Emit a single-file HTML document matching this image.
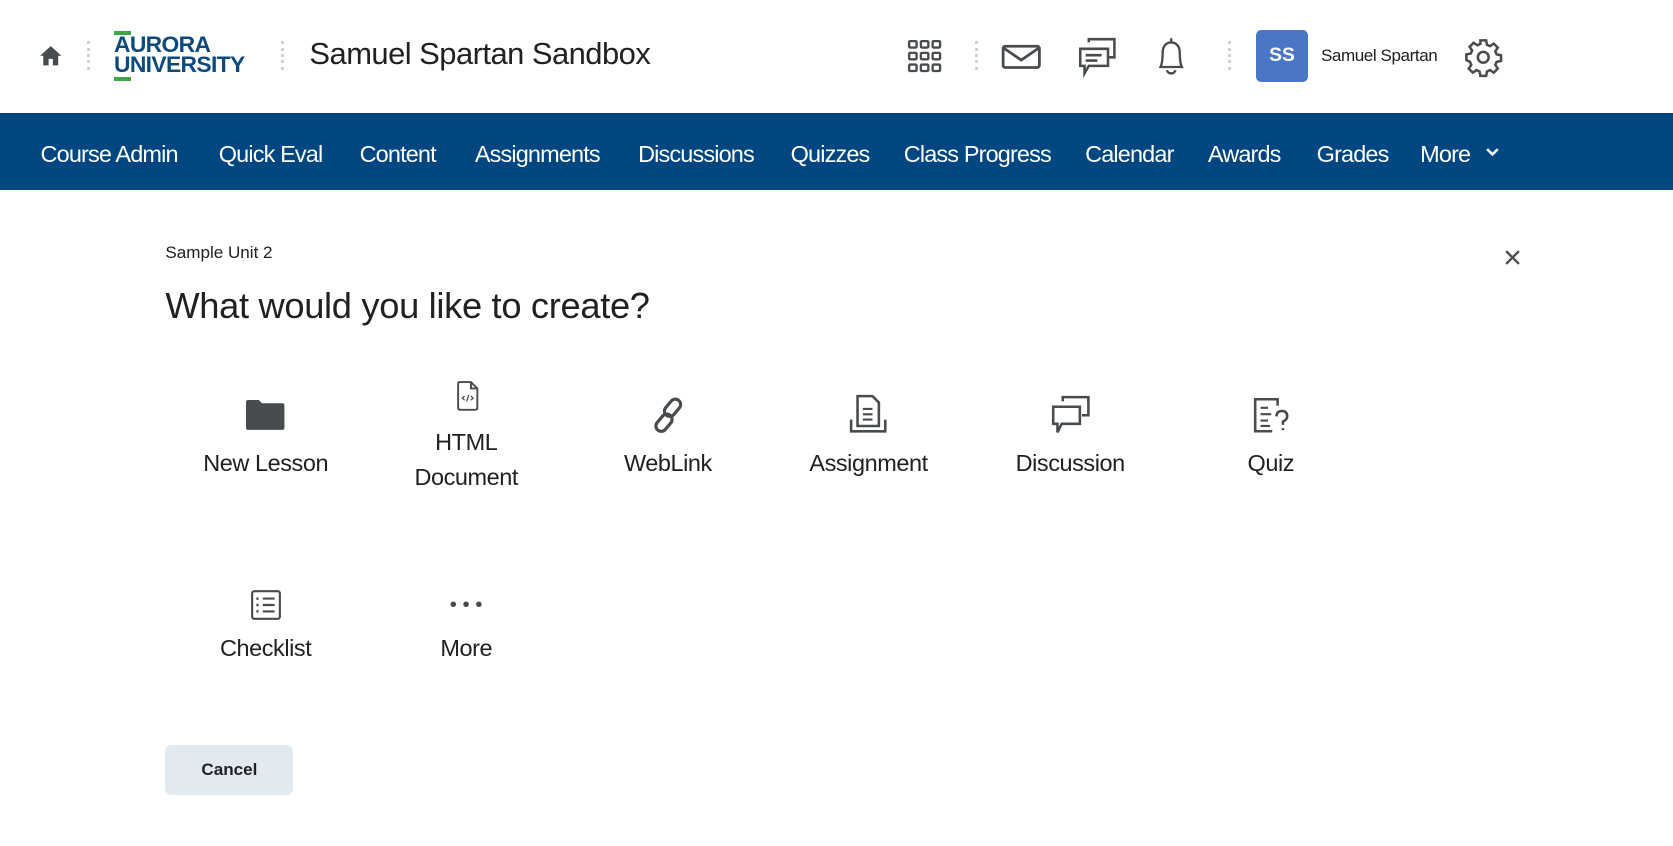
<!DOCTYPE html>
<html><head><meta charset="utf-8"><style>
*{margin:0;padding:0;box-sizing:border-box}
html,body{width:1673px;height:846px;overflow:hidden;background:#fff}
#w{zoom:1.067;width:1568px;height:793px;position:relative;font-family:"Liberation Sans",sans-serif;color:#202122}
.a{position:absolute}
.nav{top:106px;left:0;width:1568px;height:72px;background:#004680}
.nav span{position:absolute;top:26px;color:#fff;font-size:22px;letter-spacing:-0.8px;white-space:nowrap}
.dot{width:3px;border-left:3px dotted #cdd3da;height:28px}
.opt{position:absolute;width:180px;text-align:center;font-size:22px;color:#202122;line-height:33px;letter-spacing:-0.4px}
svg{display:block}
</style></head><body><div id="w">
<svg class="a" style="left:37px;top:41px" width="22" height="22" viewBox="0 0 22 22"><path d="M11 2 L1 11 H4 V20 H9 V14 H13 V20 H18 V11 H21 Z" fill="#494c4e"/></svg>
<div class="a dot" style="left:82px;top:38px"></div>
<div class="a" style="left:107px;top:29px;width:16px;height:4px;background:#3aa845"></div>
<div class="a" style="left:107px;top:72px;width:16px;height:4px;background:#3aa845"></div>
<div class="a" style="left:107px;top:33px;font-weight:bold;font-size:21px;line-height:19px;color:#0c4a7e;letter-spacing:-0.6px;transform:scaleX(1.02);transform-origin:left">AURORA<br>UNIVERSITY</div>
<div class="a dot" style="left:263px;top:38px"></div>
<div class="a" style="left:290px;top:34px;font-size:29px;color:#202122;letter-spacing:-0.5px">Samuel Spartan Sandbox</div>
<svg class="a" style="left:850px;top:37px" width="34" height="34" viewBox="0 0 34 34" fill="none" stroke="#494c4e" stroke-width="2.2"><rect x="2" y="2" width="7" height="6" rx="1"/><rect x="13" y="2" width="7" height="6" rx="1"/><rect x="24" y="2" width="7" height="6" rx="1"/><rect x="2" y="13" width="7" height="6" rx="1"/><rect x="13" y="13" width="7" height="6" rx="1"/><rect x="24" y="13" width="7" height="6" rx="1"/><rect x="2" y="24" width="7" height="6" rx="1"/><rect x="13" y="24" width="7" height="6" rx="1"/><rect x="24" y="24" width="7" height="6" rx="1"/></svg>
<div class="a dot" style="left:914px;top:38px"></div>
<svg class="a" style="left:938px;top:40px" width="38" height="26" viewBox="0 0 38 26" fill="none" stroke="#494c4e" stroke-width="2.6"><rect x="2" y="3" width="34" height="20" rx="2"/><path d="M3 5 L19 16 L35 5"/></svg>
<svg class="a" style="left:1008px;top:34px" width="40" height="40" viewBox="0 0 40 40" fill="none" stroke="#494c4e" stroke-width="2.4"><path d="M12 6 V3 H36 V20 H31"/><path d="M4 12 H30 V28 H12 L8 35 V28 H4 Z"/><path d="M9 18 H24 M9 23 H20"/></svg>
<svg class="a" style="left:1080px;top:33px" width="36" height="40" viewBox="0 0 36 40" fill="none" stroke="#494c4e" stroke-width="2.2"><path d="M18 3 V7 M8 30 C10 26 10 20 10 16 C10 10 14 7 18 7 C22 7 26 10 26 16 C26 20 26 26 28 30 Z M14 33 C15 37 21 37 22 33"/></svg>
<div class="a dot" style="left:1151px;top:38px"></div>
<div class="a" style="left:1177px;top:28px;width:49px;height:49px;background:#4a76c5;border-radius:5px;color:#fff;font-weight:bold;font-size:18px;text-align:center;line-height:48px">SS</div>
<div class="a" style="left:1238px;top:43px;font-size:16px;letter-spacing:-0.4px">Samuel Spartan</div>
<svg class="a" style="left:1371px;top:35px" width="38" height="38" viewBox="0 0 24 24" fill="none" stroke="#494c4e" stroke-width="1.5"><circle cx="12" cy="12" r="3.2"/><path d="M10.3 2h3.4l.5 2.6 1.8.8 2.2-1.5 2.4 2.4-1.5 2.2.8 1.8 2.6.5v3.4l-2.6.5-.8 1.8 1.5 2.2-2.4 2.4-2.2-1.5-1.8.8-.5 2.6h-3.4l-.5-2.6-1.8-.8-2.2 1.5-2.4-2.4 1.5-2.2-.8-1.8L2 13.7v-3.4l2.6-.5.8-1.8-1.5-2.2 2.4-2.4 2.2 1.5 1.8-.8z"/></svg>
<div class="a nav">
<span style="left:38px">Course Admin</span><span style="left:205px">Quick Eval</span><span style="left:337px">Content</span><span style="left:445px">Assignments</span><span style="left:598px">Discussions</span><span style="left:741px">Quizzes</span><span style="left:847px">Class Progress</span><span style="left:1017px">Calendar</span><span style="left:1132px">Awards</span><span style="left:1234px">Grades</span><span style="left:1331px">More</span>
<svg class="a" style="left:1392px;top:32px" width="14" height="10" viewBox="0 0 14 10"><path d="M2 2 L7 7 L12 2" stroke="#fff" stroke-width="2.4" fill="none"/></svg>
</div>
<div class="a" style="left:155px;top:228px;font-size:16px">Sample Unit 2</div>
<div class="a" style="left:155px;top:267px;font-size:34px;letter-spacing:-0.3px">What would you like to create?</div>
<svg class="a" style="left:1410px;top:233px" width="16" height="16" viewBox="0 0 16 16"><path d="M2 2 L14 14 M14 2 L2 14" stroke="#494c4e" stroke-width="2.2"/></svg>

<svg class="a" style="left:231px;top:375px" width="36" height="28" viewBox="0 0 36 28"><path d="M0 2 Q0 0 2 0 H12 L15 3 H34 Q36 3 36 5 V26 Q36 28 34 28 H2 Q0 28 0 26 Z" fill="#494c4e"/></svg>
<div class="opt" style="left:159px;top:418px">New Lesson</div>

<svg class="a" style="left:427px;top:357px" width="22" height="28" viewBox="0 0 22 28" fill="none" stroke="#494c4e" stroke-width="1.8"><path d="M3 1 H14 L20 7 V25 Q20 27 18 27 H4 Q2 27 2 25 V3 Q2 1 3 1 Z M14 1 V7 H20"/><path d="M8 14 L6 16 L8 18 M14 14 L16 16 L14 18 M12 13 L10 19" stroke-width="1.2"/></svg>
<div class="opt" style="left:347px;top:398px">HTML<br>Document</div>

<svg class="a" style="left:607px;top:370px" width="38" height="38" viewBox="0 0 38 38" fill="none" stroke="#494c4e" stroke-width="3"><rect x="18" y="3" width="10" height="18" rx="5" transform="rotate(40 23 12)"/><rect x="10" y="17" width="10" height="18" rx="5" transform="rotate(40 15 26)"/></svg>
<div class="opt" style="left:536px;top:418px">WebLink</div>

<svg class="a" style="left:796px;top:369px" width="36" height="38" viewBox="0 0 36 38" fill="none" stroke="#494c4e" stroke-width="2.4"><path d="M8 2 H22 L28 8 V30 H8 Z"/><path d="M13 14 H22 M13 19 H22 M13 24 H22" stroke-width="2"/><path d="M2 24 V35 H34 V24"/></svg>
<div class="opt" style="left:724px;top:418px">Assignment</div>

<svg class="a" style="left:984px;top:370px" width="40" height="38" viewBox="0 0 40 38" fill="none" stroke="#494c4e" stroke-width="2.4"><path d="M12 6 V2 H36 V19 H30"/><path d="M3 11 H28 V27 H11 L7 35 V27 H3 Z"/></svg>
<div class="opt" style="left:913px;top:418px">Discussion</div>

<svg class="a" style="left:1173px;top:370px" width="38" height="38" viewBox="0 0 38 38" fill="none" stroke="#494c4e" stroke-width="2.4"><path d="M24 10 V4 H3 V34 H19"/><path d="M8 12 H15 M8 18 H18 M8 24 H15 M8 29 H17" stroke-width="2"/><path d="M23 20 Q23 15 28 15 Q33 15 33 20 Q33 23 29 25 V28 M29 31 V33"/></svg>
<div class="opt" style="left:1101px;top:418px">Quiz</div>

<svg class="a" style="left:234px;top:552px" width="30" height="30" viewBox="0 0 30 30" fill="none" stroke="#494c4e" stroke-width="2"><rect x="2" y="2" width="26" height="26" rx="2"/><path d="M12 9 H23 M12 15 H23 M12 21 H23" /><path d="M6 9 H8 M6 15 H8 M6 21 H8" stroke-width="2.4"/></svg>
<div class="opt" style="left:159px;top:591px">Checklist</div>

<svg class="a" style="left:421px;top:562px" width="32" height="8" viewBox="0 0 32 8" fill="#494c4e"><circle cx="4" cy="4" r="2.6"/><circle cx="16" cy="4" r="2.6"/><circle cx="28" cy="4" r="2.6"/></svg>
<div class="opt" style="left:347px;top:591px">More</div>

<div class="a" style="left:155px;top:698px;width:120px;height:47px;background:#e3e9f1;border-radius:6px;font-size:16px;font-weight:bold;text-align:center;line-height:46px;color:#202122">Cancel</div>
</div></body></html>
